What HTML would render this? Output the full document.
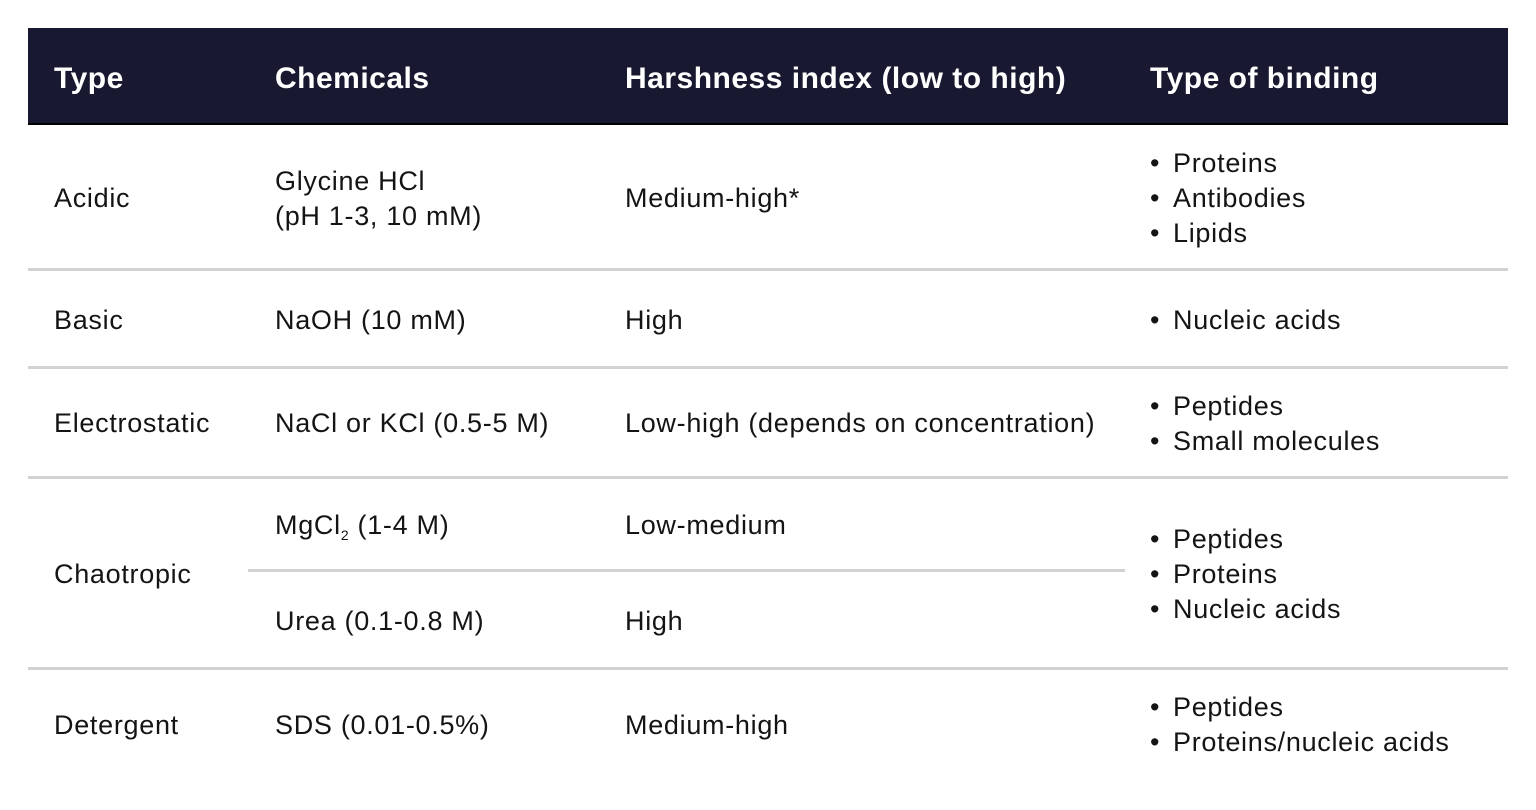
<!DOCTYPE html>
<html><head><meta charset="utf-8"><style>
body{margin:0;width:1536px;height:810px;background:#fff;position:relative;overflow:hidden;font-family:"Liberation Sans",sans-serif;color:#141414}
.h{position:absolute;left:28px;top:28px;width:1480px;height:95px;background:#181830;border-bottom:2px solid #000}
.ht{position:absolute;color:#fff;font-weight:bold;font-size:30px;letter-spacing:0.5px;line-height:30px;top:64px;white-space:nowrap}
.t{position:absolute;font-size:27px;letter-spacing:0.7px;line-height:35px;white-space:nowrap}
.b{position:absolute;left:1150px;font-size:27px;line-height:35px}
.b div{position:relative;padding-left:23px;white-space:nowrap;letter-spacing:0.7px}
.b div:before{content:"•";position:absolute;left:0}
.l{position:absolute;height:3px;background:#d2d2d2}
</style></head><body>
<div class="h"></div>
<div class="ht" style="left:54px">Type</div>
<div class="ht" style="left:275px">Chemicals</div>
<div class="ht" style="left:625px">Harshness index (low to high)</div>
<div class="ht" style="left:1150px">Type of binding</div>

<div class="l" style="left:28px;width:1480px;top:268px"></div>
<div class="l" style="left:28px;width:1480px;top:366px"></div>
<div class="l" style="left:28px;width:1480px;top:476px"></div>
<div class="l" style="left:248px;width:877px;top:569px"></div>
<div class="l" style="left:28px;width:1480px;top:667px"></div>

<div class="t" style="left:54px;top:181px">Acidic</div>
<div class="t" style="left:275px;top:164px">Glycine HCl</div>
<div class="t" style="left:275px;top:199px">(pH 1-3, 10 mM)</div>
<div class="t" style="left:625px;top:181px">Medium-high*</div>
<div class="b" style="top:146px"><div>Proteins</div><div>Antibodies</div><div>Lipids</div></div>

<div class="t" style="left:54px;top:303px">Basic</div>
<div class="t" style="left:275px;top:303px">NaOH (10 mM)</div>
<div class="t" style="left:625px;top:303px">High</div>
<div class="b" style="top:303px"><div>Nucleic acids</div></div>

<div class="t" style="left:54px;top:406px">Electrostatic</div>
<div class="t" style="left:275px;top:406px">NaCl or KCl (0.5-5 M)</div>
<div class="t" style="left:625px;top:406px">Low-high (depends on concentration)</div>
<div class="b" style="top:389px"><div>Peptides</div><div>Small molecules</div></div>

<div class="t" style="left:54px;top:557px">Chaotropic</div>
<div class="t" style="left:275px;top:508px">MgCl<sub style="font-size:14px;vertical-align:-6px">2</sub> (1-4 M)</div>
<div class="t" style="left:625px;top:508px">Low-medium</div>
<div class="t" style="left:275px;top:604px">Urea (0.1-0.8 M)</div>
<div class="t" style="left:625px;top:604px">High</div>
<div class="b" style="top:522px"><div>Peptides</div><div>Proteins</div><div>Nucleic acids</div></div>

<div class="t" style="left:54px;top:708px">Detergent</div>
<div class="t" style="left:275px;top:708px">SDS (0.01-0.5%)</div>
<div class="t" style="left:625px;top:708px">Medium-high</div>
<div class="b" style="top:690px"><div>Peptides</div><div>Proteins/nucleic acids</div></div>
</body></html>
